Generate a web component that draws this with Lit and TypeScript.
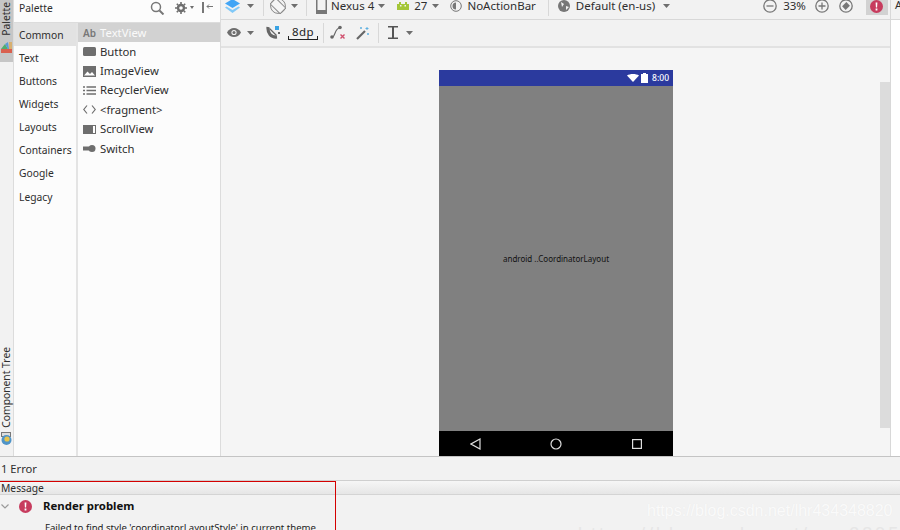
import { LitElement, html, css, svg } from 'lit'
import { customElement } from 'lit/decorators.js'

const caret = html`<svg class="caret" width="7" height="4" viewBox="0 0 7 4"><path d="M0 0h7L3.5 4z" fill="#6e6e6e"/></svg>`

const categories = ['Common', 'Text', 'Buttons', 'Widgets', 'Layouts', 'Containers', 'Google', 'Legacy']

const widgets = [
  { name: 'Button', icon: svg`<rect x="0" y="1" width="13" height="9" rx="1.5" fill="#6e6e6e"/>` },
  { name: 'ImageView', icon: svg`<rect x="0" y="0" width="13" height="11" fill="#6e6e6e"/><path d="M1 9.5l3.5-4 2.5 2.5 2-2 3 3.5z" fill="#fff"/>` },
  { name: 'RecyclerView', icon: svg`<path d="M0 2h2M0 5.5h2M0 9h2M3.5 2H13M3.5 5.5H13M3.5 9H13" stroke="#6e6e6e" stroke-width="1.4"/>` },
  { name: '<fragment>', icon: svg`<path d="M4 1.5L.8 5.5 4 9.5M9 1.5l3.2 4L9 9.5" stroke="#6e6e6e" stroke-width="1.2" fill="none"/>` },
  { name: 'ScrollView', icon: svg`<rect x="0" y="1" width="13" height="9" fill="#6e6e6e"/><rect x="10" y="2" width="2" height="7" fill="#fff"/>` },
  { name: 'Switch', icon: svg`<rect x="0" y="3.5" width="6" height="4" fill="#6e6e6e"/><circle cx="9" cy="5.5" r="3.5" fill="#6e6e6e"/>` },
]

@customElement('app-root')
export class AppRoot extends LitElement {
  static styles = css`
    :host {
      display: block;
      position: relative;
      width: 900px;
      height: 530px;
      overflow: hidden;
      background: #f2f2f2;
      color: #2e2e2e;
      font-family: 'Noto Sans', 'Liberation Sans', sans-serif;
      font-size: 10.3px;
      line-height: 14px;
    }
    svg { display: block; flex: none; }

    .main { display: flex; height: 456px; border-bottom: 1px solid #c4c4c4; }

    .rail {
      width: 13px;
      flex: none;
      display: flex;
      flex-direction: column;
      justify-content: space-between;
      border-right: 1px solid #dcdcdc;
    }
    .railTab {
      height: 62px;
      background: #c6c6c6;
      display: flex;
      flex-direction: column;
      align-items: center;
      padding-top: 2px;
      box-sizing: border-box;
    }
    .railBottom { display: flex; flex-direction: column; align-items: center; padding-bottom: 11px; }
    .vert { writing-mode: vertical-rl; transform: rotate(180deg) translateX(1px); line-height: 12px; font-size: 10.3px; }
    .railIcon { margin-top: 6px; }
    .treeIcon { margin-top: 4px; }

    .palette { width: 206px; flex: none; display: flex; flex-direction: column; background: #fcfcfc; border-right: 1px solid #dcdcdc; }
    .palHead {
      height: 23px;
      flex: none;
      display: flex;
      align-items: center;
      padding: 0 0 7px 5px;
      box-sizing: border-box;
      border-bottom: 1px solid #dcdcdc;
    }
    .palTitle { flex: 1; }
    .gearCaret { margin: 0 7px 0 3px; }
    .collapse { margin-right: 7px; }
    .palBody { flex: 1; display: flex; }
    .cats { width: 62px; flex: none; border-right: 2px solid #e4e4e4; }
    .cat { height: 23.15px; padding-left: 5px; display: flex; align-items: center; }
    .cat.sel { background: #e2e2e2; }
    .items { flex: 1; font-size: 11.3px; }
    .item { height: 19.4px; display: flex; align-items: center; padding-left: 5px; gap: 4px; }
    .item.sel { background: #d2d2d2; color: #fafafa; height: 19px; }
    .ab { width: 13px; color: #777; font-weight: 600; font-size: 10px; }

    .design { flex: 1; display: flex; flex-direction: column; min-width: 0; }
    .bar1 { height: 19px; flex: none; overflow: hidden; border-bottom: 1px solid #d8d8d8; font-size: 11.5px; }
    .bar1In { display: flex; align-items: center; height: 18px; margin-top: -3px; padding-left: 4px; }
    .bar2 { height: 28px; flex: none; display: flex; align-items: center; padding: 0 0 1px 6px; box-sizing: border-box; border-bottom: 2px solid #e2e2e2; }
    .sep { width: 1px; height: 20px; background: #d8d8d8; flex: none; }
    .errBtn { width: 22px; height: 18px; background: #d2d2d2; display: flex; justify-content: center; align-items: center; margin-left: 13px; }

    .m4 { margin-left: 4px; } .m5 { margin-left: 5px; } .m6 { margin-left: 6px; } .m7 { margin-left: 7px; }
    .m8 { margin-left: 8px; } .m9 { margin-left: 9px; } .m10 { margin-left: 10px; } .m11 { margin-left: 11px; }
    .m12 { margin-left: 12px; } .m93 { margin-left: 93px; }

    .ruler {
      position: relative;
      width: 30px;
      height: 13px;
      box-sizing: border-box;
      border-bottom: 1px solid #222;
      text-align: center;
      line-height: 10px;
      font-size: 11.5px;
      letter-spacing: 0.4px;
      color: #222;
      top: 1px;
    }
    .ruler::before, .ruler::after {
      content: '';
      position: absolute;
      bottom: -1px;
      width: 1px;
      height: 4px;
      background: #222;
    }
    .ruler::before { left: 0; }
    .ruler::after { right: 0; }

    .canvas { flex: 1; position: relative; background: #f5f5f5; padding: 22px 0 0 218px; min-height: 0; overflow: hidden; }
    .scroll { position: absolute; top: 34px; right: 0; width: 10px; height: 346px; background: #dcdcdc; }
    .phone { width: 234px; height: 386px; display: flex; flex-direction: column; }
    .status {
      height: 16px;
      background: #2b3a9e;
      display: flex;
      align-items: center;
      justify-content: flex-end;
      gap: 2px;
      padding-right: 4px;
      color: #fff;
      font-size: 8.5px;
      font-weight: 500;
    }
    .clock { margin-left: 2px; }
    .screen {
      flex: 1;
      background: #808080;
      display: flex;
      align-items: center;
      justify-content: center;
      color: #111;
      font-size: 8px;
      padding-top: 1px;
    }
    .nav { height: 25px; background: #000; display: flex; align-items: center; padding-left: 31px; }
    .navHome { margin-left: 69px; }
    .navRecent { margin-left: 70px; }

    .attrs { width: 9px; flex: none; background: #fff; border-left: 1px solid #d8d8d8; overflow: hidden; }
    .attrsHead { height: 19px; background: #f2f2f2; border-bottom: 1px solid #d8d8d8; padding-left: 4px; white-space: nowrap; line-height: 10px; font-size: 11px; }

    .errors { height: 24px; display: flex; align-items: center; padding-left: 1px; border-bottom: 1px solid #cfcfcf; box-sizing: border-box; font-size: 11.2px; }
    .msgHead {
      height: 14px;
      line-height: 15px;
      padding-left: 1px;
      background: linear-gradient(#f6f6f6, #e6e6e6);
      border-bottom: 1px solid #d4d4d4;
      box-sizing: border-box;
    }
    .problem { height: 22px; box-sizing: border-box; display: flex; align-items: center; padding-left: 1px; }
    .chevronGap { margin-left: 10px; }
    .problem b { color: #111; font-size: 11.4px; margin-left: 11px; }
    .detail { padding-left: 45px; font-size: 9.6px; line-height: 12px; color: #222; white-space: nowrap; margin-top: 5px; }

    .redBox { position: absolute; left: -2px; top: 481px; width: 336px; height: 60px; border: 1px solid #d40000; }
    .mark1 {
      position: absolute;
      left: 647px;
      top: 501px;
      font-family: 'Liberation Sans', sans-serif;
      font-size: 16px;
      line-height: 20px;
      color: #fafafa;
      text-shadow: 0 0 1px #e8e8e8;
      white-space: nowrap;
    }
    .mark2 {
      position: absolute;
      left: 578px;
      top: 523px;
      font-family: 'Liberation Sans', sans-serif;
      font-size: 18px;
      letter-spacing: 3px;
      line-height: 22px;
      color: #e6e6e6;
      white-space: nowrap;
    }
  `

  render() {
    return html`
      <div class="main">
        <div class="rail">
          <div class="railTab">
            <span class="vert">Palette</span>
            <svg class="railIcon" width="11" height="11" viewBox="0 0 11 11">
              <path d="M0 7L4 2l3 5z" fill="#4fae6e"/><path d="M4 2l3-2 1 7H7z" fill="#5b9bd5"/><path d="M8 0h3v7H8z" fill="#d8b070"/>
              <rect x="0" y="7" width="11" height="4" fill="#d9604f"/>
            </svg>
          </div>
          <div class="railBottom">
            <span class="vert">Component Tree</span>
            <svg class="treeIcon" width="11" height="13" viewBox="0 0 11 13">
              <rect x="0.5" y="0.5" width="9" height="4" fill="#ddd" stroke="#777"/>
              <circle cx="5.5" cy="8" r="5" fill="#4f94c8"/><circle cx="6" cy="7" r="2.6" fill="#e8c44a"/>
            </svg>
          </div>
        </div>

        <div class="palette">
          <div class="palHead">
            <span class="palTitle">Palette</span>
            <svg width="15" height="14" viewBox="0 0 15 14"><circle cx="6" cy="6" r="4.5" fill="none" stroke="#777" stroke-width="1.5"/><path d="M9.5 9.5l4 4" stroke="#777" stroke-width="2"/></svg>
            <svg class="m10" width="12" height="12" viewBox="0 0 12 12"><circle cx="6" cy="6" r="3" fill="none" stroke="#6e6e6e" stroke-width="2.4"/><path d="M6 0v12M0 6h12M1.8 1.8l8.4 8.4M10.2 1.8l-8.4 8.4" stroke="#6e6e6e" stroke-width="1.6" stroke-dasharray="2 8"/></svg>
            <svg class="gearCaret" width="4" height="3" viewBox="0 0 4 3"><path d="M0 0h4L2 3z" fill="#6e6e6e"/></svg>
            <svg class="collapse" width="12" height="11" viewBox="0 0 12 11"><path d="M1 0h2v11H1z" fill="#777"/><path d="M12 4.5H6M6 4.5l2-2M6 4.5l2 2" stroke="#777" fill="none"/></svg>
          </div>
          <div class="palBody">
            <div class="cats">
              ${categories.map((c, i) => html`<div class="cat ${i === 0 ? 'sel' : ''}">${c}</div>`)}
            </div>
            <div class="items">
              <div class="item sel"><span class="ab">Ab</span><span>TextView</span></div>
              ${widgets.map(w => html`
                <div class="item">
                  <svg width="13" height="11" viewBox="0 0 13 11">${w.icon}</svg>
                  <span>${w.name}</span>
                </div>`)}
            </div>
          </div>
        </div>

        <div class="design">
          <div class="bar1">
            <div class="bar1In">
              <svg width="15" height="16" viewBox="0 0 15 16"><path d="M7.5 1L15 5.5 7.5 10 0 5.5z" fill="#42a5f5"/><path d="M1.5 8.5l6 3.6 6-3.6 1.5 1L7.5 15 0 9.5z" fill="#81c9f8"/></svg>
              <span class="m7">${caret}</span>
              <div class="sep m9"></div>
              <svg class="m6" width="16" height="16" viewBox="0 0 16 16"><circle cx="8" cy="8" r="7.4" fill="none" stroke="#888"/><rect x="4" y="1" width="8" height="14" transform="rotate(-45 8 8)" fill="#f5f5f5" stroke="#888"/></svg>
              <span class="m5">${caret}</span>
              <div class="sep m8"></div>
              <svg class="m9" width="11" height="16" viewBox="0 0 11 16"><rect x="0.75" y="0.75" width="9.5" height="14.5" rx="1" fill="none" stroke="#777" stroke-width="1.5"/><rect x="0" y="12" width="11" height="4" fill="#777"/></svg>
              <span class="m4">Nexus 4</span>
              <span class="m4">${caret}</span>
              <svg class="m12" width="12" height="10" viewBox="0 0 12 10"><path d="M2 1h2v2h4V1h2v2h2v6H0V3h2z" fill="#a4c639"/><path d="M3 4h1.5v1.5H3zM7.5 4H9v1.5H7.5z" fill="#f2f2f2"/></svg>
              <span class="m5">27</span>
              <span class="m5">${caret}</span>
              <svg class="m11" width="12" height="12" viewBox="0 0 12 12"><circle cx="6" cy="6" r="5.3" fill="none" stroke="#777"/><path d="M6 2.5a3.5 3.5 0 0 0 0 7z" fill="#777"/></svg>
              <span class="m5">NoActionBar</span>
              <div class="sep m12"></div>
              <svg class="m9" width="12" height="12" viewBox="0 0 12 12"><circle cx="6" cy="6" r="6" fill="#777"/><path d="M3 2l3 2-2 3zM8 6l3 1-3 3z" fill="#f2f2f2"/></svg>
              <span class="m6">Default (en-us)</span>
              <span class="m8">${caret}</span>
              <svg class="m93" width="14" height="14" viewBox="0 0 14 14"><circle cx="7" cy="7" r="6.2" fill="none" stroke="#777" stroke-width="1.3"/><path d="M3.5 7h7" stroke="#777" stroke-width="1.3"/></svg>
              <span class="m6">33%</span>
              <svg class="m9" width="14" height="14" viewBox="0 0 14 14"><circle cx="7" cy="7" r="6.2" fill="none" stroke="#777" stroke-width="1.3"/><path d="M3.5 7h7M7 3.5v7" stroke="#777" stroke-width="1.3"/></svg>
              <svg class="m10" width="14" height="14" viewBox="0 0 14 14"><circle cx="7" cy="7" r="6.2" fill="none" stroke="#777" stroke-width="1.3"/><rect x="4" y="4.5" width="6" height="5" transform="rotate(-45 7 7)" fill="#777"/></svg>
              <div class="errBtn">
                <svg width="13" height="13" viewBox="0 0 13 13"><circle cx="6.5" cy="6.5" r="6.5" fill="#c73c5e"/><path d="M5.6 2.5h1.8l-.3 5H5.9zM5.6 8.6h1.8v1.8H5.6z" fill="#fff"/></svg>
              </div>
            </div>
          </div>
          <div class="bar2">
            <svg width="14" height="9" viewBox="0 0 14 9"><path d="M0 4.5C3 -1.5 11 -1.5 14 4.5 11 10.5 3 10.5 0 4.5z" fill="#6e6e6e"/><circle cx="7" cy="4.5" r="2.6" fill="#f2f2f2"/><circle cx="7" cy="4.5" r="1.5" fill="#6e6e6e"/></svg>
            <span class="m6">${caret}</span>
            <svg class="m12" width="14" height="13" viewBox="0 0 14 13"><path d="M2 1C1.5 7 5 11.5 11 11" fill="none" stroke="#666" stroke-width="3.2"/><path d="M3.5 2.5l7 7" stroke="#666" stroke-width="1.2"/><rect x="9" y="0" width="4" height="4" fill="#3aa3e3"/><rect x="12" y="6" width="2" height="2" fill="#666"/></svg>
            <div class="ruler m8">8dp</div>
            <div class="sep m5"></div>
            <svg class="m6" width="16" height="15" viewBox="0 0 16 15"><path d="M2 12C6 12 4 3 10 3" fill="none" stroke="#666" stroke-width="1.2"/><circle cx="2" cy="12" r="1.8" fill="#666"/><circle cx="10" cy="2.5" r="1.8" fill="#666"/><path d="M10.5 9.5l4 4M14.5 9.5l-4 4" stroke="#d0506e" stroke-width="1.4"/></svg>
            <svg class="m10" width="14" height="14" viewBox="0 0 14 14"><path d="M1 13L9 5" stroke="#666" stroke-width="2.2"/><path d="M11 1v3M9.5 2.5h3M5 1v2M4 2h2" stroke="#5fb0e0"/><path d="M12 7v2M11 8h2" stroke="#5fb0e0"/></svg>
            <div class="sep m8"></div>
            <svg class="m9" width="10" height="13" viewBox="0 0 10 13"><path d="M0 .75h10M0 12.25h10" stroke="#555" stroke-width="1.5"/><path d="M5 1v11" stroke="#555" stroke-width="2"/></svg>
            <span class="m8">${caret}</span>
          </div>
          <div class="canvas">
            <div class="scroll"></div>
            <div class="phone">
              <div class="status">
                <svg width="12" height="8" viewBox="0 0 12 8"><path d="M0 1.5C3-.5 9-.5 12 1.5L6 8z" fill="#fff"/></svg>
                <svg width="7" height="10" viewBox="0 0 7 10"><path d="M0 1h2V0h3v1h2v9H0z" fill="#fff"/></svg>
                <span class="clock">8:00</span>
              </div>
              <div class="screen">android ..CoordinatorLayout</div>
              <div class="nav">
                <svg width="11" height="12" viewBox="0 0 11 12"><path d="M10 1v10L1 6z" fill="none" stroke="#ddd" stroke-width="1.2"/></svg>
                <svg class="navHome" width="12" height="12" viewBox="0 0 12 12"><circle cx="6" cy="6" r="5" fill="none" stroke="#ddd" stroke-width="1.2"/></svg>
                <svg class="navRecent" width="10" height="10" viewBox="0 0 10 10"><rect x="0.6" y="0.6" width="8.8" height="8.8" fill="none" stroke="#ddd" stroke-width="1.2"/></svg>
              </div>
            </div>
          </div>
        </div>

        <div class="attrs"><div class="attrsHead">Attributes</div></div>
      </div>

      <div class="errors">1 Error</div>
      <div class="msgHead">Message</div>
      <div class="problem">
        <svg width="8" height="5" viewBox="0 0 8 5"><path d="M.5.5L4 4 7.5.5" fill="none" stroke="#9a9a9a" stroke-width="1.2"/></svg>
        <svg class="chevronGap" width="13" height="13" viewBox="0 0 13 13"><circle cx="6.5" cy="6.5" r="6.5" fill="#c73c5e"/><path d="M5.6 2.5h1.8l-.3 5H5.9zM5.6 8.6h1.8v1.8H5.6z" fill="#fff"/></svg>
        <b>Render problem</b>
      </div>
      <div class="detail">Failed to find style 'coordinatorLayoutStyle' in current theme</div>

      <div class="redBox"></div>
      <div class="mark1">https://blog.csdn.net/lhr434348820</div>
      <div class="mark2">https://blog.csdn.net/qq_38951861</div>
    `
  }
}

declare global {
  interface HTMLElementTagNameMap {
    'app-root': AppRoot,
  }
}
